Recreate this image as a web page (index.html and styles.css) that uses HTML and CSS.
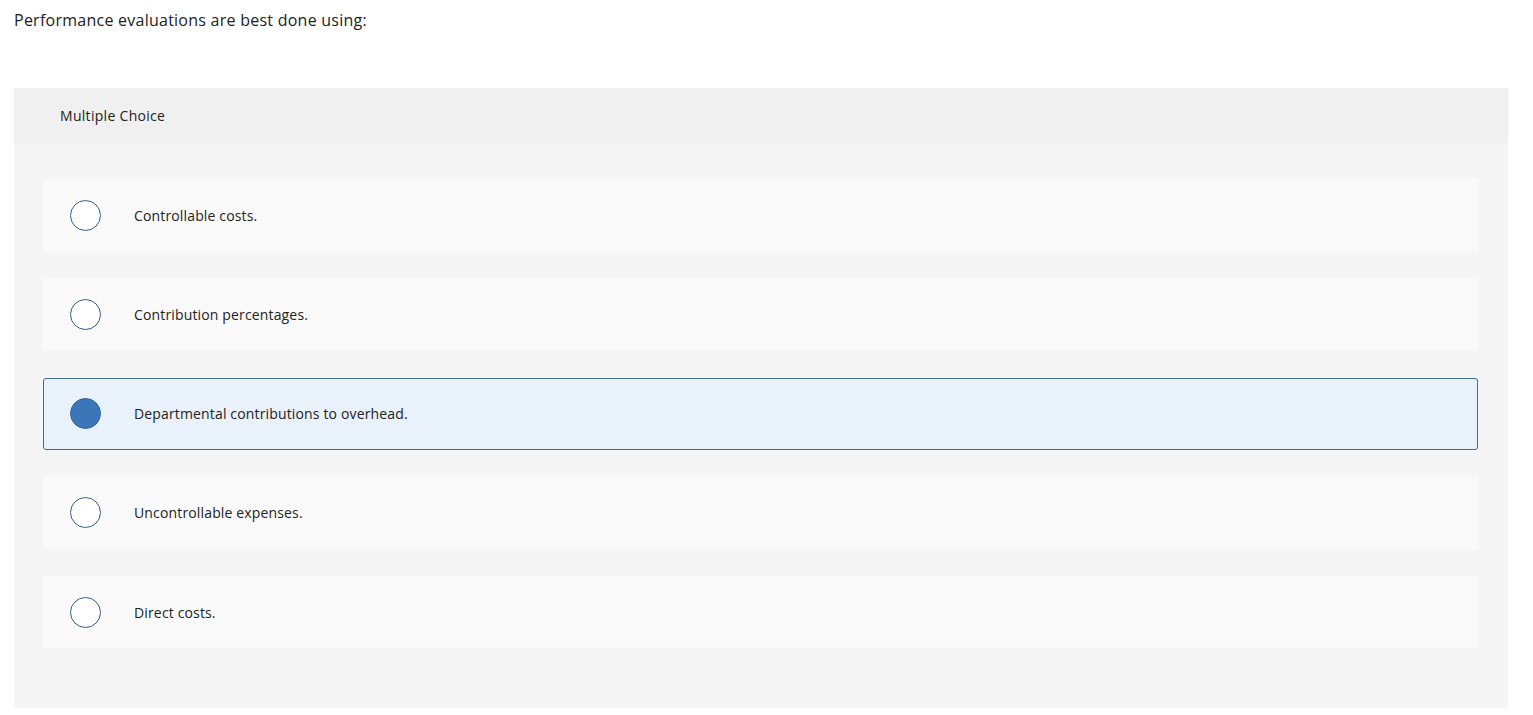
FILE: index.html
```html
<!DOCTYPE html>
<html lang="en">
<head>
<meta charset="utf-8">
<title>Multiple Choice</title>
<link rel="stylesheet" href="styles.css">
</head>
<body>
<p class="question">Performance evaluations are best done using:</p>
<section class="panel">
  <header class="panel-head">Multiple Choice</header>
  <div class="options">
    <label class="option"><span class="radio"></span><span class="label">Controllable costs.</span></label>
    <label class="option"><span class="radio"></span><span class="label">Contribution percentages.</span></label>
    <label class="option selected"><span class="radio"></span><span class="label">Departmental contributions to overhead.</span></label>
    <label class="option"><span class="radio"></span><span class="label">Uncontrollable expenses.</span></label>
    <label class="option"><span class="radio"></span><span class="label">Direct costs.</span></label>
  </div>
</section>
</body>
</html>
```
FILE: styles.css
```css
html, body {
  margin: 0;
  padding: 0;
  background: #ffffff;
}
body {
  font-family: "Open Sans", "Liberation Sans", sans-serif;
  color: #222;
  padding: 0 25px 0 14px;
}
.question {
  margin: 0;
  padding-top: 10px;
  height: 78px;
  font-size: 16px;
  line-height: 20px;
  letter-spacing: 0.25px;
  color: #222;
}
.panel {
  background: #f5f5f5;
  border-radius: 0 0 4px 4px;
  padding-bottom: 60px;
}
.panel-head {
  background: #f0f0f0;
  height: 55px;
  display: flex;
  align-items: center;
  padding-left: 46px;
  font-size: 14px;
  letter-spacing: 0.3px;
  color: #222;
}
.options {
  display: flex;
  flex-direction: column;
  gap: 27.25px;
  padding: 36px 30px 0 29px;
}
.option {
  height: 72px;
  box-sizing: border-box;
  background: #fafafa;
  border: 1px solid transparent;
  border-radius: 3px;
  display: flex;
  align-items: center;
  padding-left: 26px;
}
.option.selected {
  background: #e9f1fa;
  border-color: #3d6a98;
}
.radio {
  width: 31px;
  height: 31px;
  box-sizing: border-box;
  border: 1.5px solid #2f5f91;
  border-radius: 50%;
  background: #fff;
  flex: none;
}
.option.selected .radio {
  background: #3b76b9;
  border-color: #2e63a0;
}
.label {
  margin-left: 33px;
  font-size: 14px;
  letter-spacing: 0.15px;
  color: #222;
}
```
